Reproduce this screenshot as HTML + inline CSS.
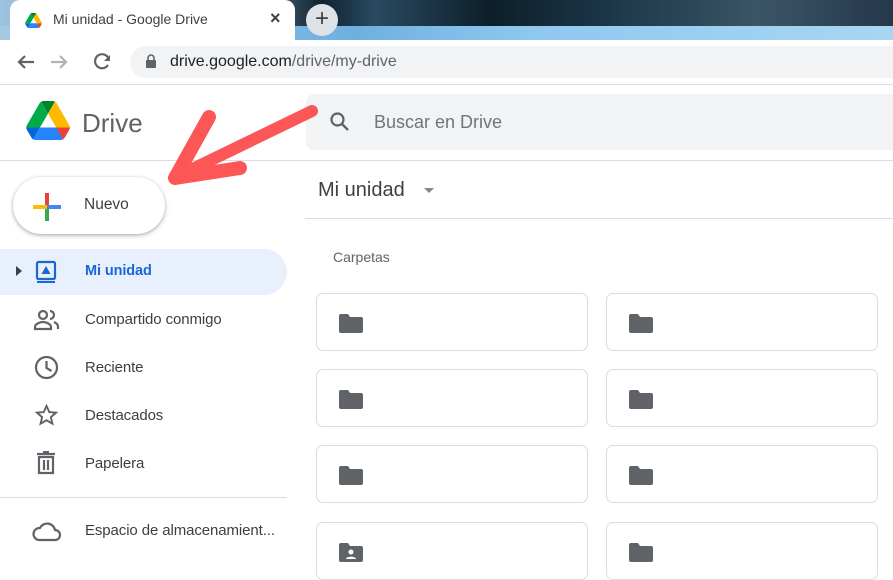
<!DOCTYPE html>
<html><head><meta charset="utf-8"><style>
*{margin:0;padding:0;box-sizing:border-box}
body{width:893px;height:562px;overflow:hidden;background:#fff;font-family:"Liberation Sans",Arial,sans-serif;position:relative;color:#3c4043}
.abs{position:absolute}
.tabbar{left:0;top:0;width:893px;height:40px;background:linear-gradient(90deg,#9cc3e0 0%,#5f7f98 28%,#0f2230 36%,#2a4a60 42%,#0c1e2a 55%,#1e3a4d 70%,#3b5566 85%,#24384a 100%)}
.tabbar2{left:0;top:26px;width:893px;height:14px;background:linear-gradient(90deg,#a8c8e0,#6fb0e0 40%,#8fc8ef 60%,#a8d6f2)}
.tab{left:10px;top:0;width:285px;height:42px;background:#fff;border-radius:10px 10px 0 0}
.item{position:absolute;left:85px;font-size:15px;color:#3c4043;letter-spacing:-.1px}
.card{position:absolute;width:272px;height:58px;border:1px solid #dadce0;border-radius:7px;background:#fff}
.fold{position:absolute;left:22px;top:20px;width:24px;height:19px}
</style></head><body>
<div class="abs tabbar"></div><div class="abs tabbar2"></div>
<div class="abs tab"></div>
<svg class="abs" style="left:25px;top:13px" width="17" height="15" viewBox="0 0 87 78"><path d="M6.6 66.850l3.85 6.65c.8 1.4 1.95 2.5 3.3 3.3L27.5 53H0c0 1.55.4 3.1 1.2 4.5z" fill="#0066da"/><path d="M43.65 25L29.9 1.2c-1.35.8-2.5 1.9-3.3 3.3L1.2 48.5A9 9 0 000 53h27.5z" fill="#00ac47"/><path d="M73.55 76.8c1.35-.8 2.5-1.9 3.3-3.3l1.6-2.75 7.65-13.25c.8-1.4 1.2-2.95 1.2-4.5H59.8l5.85 11.5z" fill="#ea4335"/><path d="M43.65 25L57.4 1.2C56.050.4 54.5 0 52.9 0H34.4c-1.6 0-3.15.45-4.5 1.2z" fill="#00832d"/><path d="M59.8 53H27.5L13.75 76.8c1.35.8 2.9 1.2 4.5 1.2h50.8c1.6 0 3.15-.45 4.5-1.2z" fill="#2684fc"/><path d="M73.4 26.5L60.7 4.5c-.8-1.4-1.950-2.5-3.3-3.3L43.65 25 59.8 53h27.45c0-1.55-.4-3.1-1.2-4.5z" fill="#ffba00"/></svg>
<div class="abs" style="left:53px;top:11px;font-size:14px;color:#3c4043">Mi unidad - Google Drive</div>
<div class="abs" style="left:270px;top:8px;font-size:18px;color:#3c4043;font-weight:bold">×</div>
<div class="abs" style="left:306px;top:4px;width:32px;height:32px;border-radius:50%;background:#dee1e6;text-align:center;line-height:30px;font-size:24px;color:#3c4043">+</div>
<svg class="abs" style="left:14px;top:52px" width="100" height="20" viewBox="0 0 100 20" fill="none" stroke-width="2.2"><path d="M20 10H5M11 4L5 10l6 6" stroke="#5f6368"/><path d="M52 10H37M46 4l6 6-6 6" stroke="#b0b3b8"/><path d="M95 8A7 7 0 1 0 94 13" stroke="#5f6368"/><path d="M96 3v6h-6z" fill="#5f6368" stroke="none"/></svg>
<div class="abs" style="left:130px;top:46px;width:780px;height:32px;border-radius:16px;background:#f1f3f4"></div>
<svg class="abs" style="left:145px;top:54px" width="12" height="14" viewBox="0 0 12 14"><rect x="1" y="6" width="10" height="8" rx="1" fill="#5f6368"/><path d="M3 6V4a3 3 0 0 1 6 0v2" stroke="#5f6368" stroke-width="1.6" fill="none"/></svg>
<div class="abs" style="left:170px;top:53px;font-size:16px;color:#202124">drive.google.com<span style="color:#5f6368">/drive/my-drive</span></div>
<div class="abs" style="left:0;top:84px;width:893px;height:1px;background:#dadce0"></div>
<svg class="abs" style="left:26px;top:101px" width="44" height="39" viewBox="0 0 87 78"><path d="M6.6 66.85l3.85 6.65c.8 1.4 1.95 2.5 3.3 3.3L27.5 53H0c0 1.55.4 3.1 1.2 4.5z" fill="#0066da"/><path d="M43.65 25L29.9 1.2c-1.35.8-2.5 1.9-3.3 3.3L1.2 48.5A9 9 0 000 53h27.5z" fill="#00ac47"/><path d="M73.55 76.8c1.35-.8 2.5-1.9 3.3-3.3l1.6-2.75 7.65-13.25c.8-1.4 1.2-2.95 1.2-4.5H59.8l5.85 11.5z" fill="#ea4335"/><path d="M43.65 25L57.4 1.2C56.05.4 54.5 0 52.9 0H34.4c-1.6 0-3.15.45-4.5 1.2z" fill="#00832d"/><path d="M59.8 53H27.5L13.75 76.8c1.35.8 2.9 1.2 4.5 1.2h50.8c1.6 0 3.15-.45 4.5-1.2z" fill="#2684fc"/><path d="M73.4 26.5L60.7 4.5c-.8-1.4-1.95-2.5-3.3-3.3L43.65 25 59.8 53h27.45c0-1.55-.4-3.1-1.2-4.5z" fill="#ffba00"/></svg>
<div class="abs" style="left:82px;top:108px;font-size:26px;color:#5f6368">Drive</div>
<div class="abs" style="left:306px;top:94px;width:600px;height:56px;border-radius:8px;background:#f1f3f4"></div>
<svg class="abs" style="left:328px;top:110px" width="24" height="24" viewBox="0 0 24 24"><circle cx="9.5" cy="9.5" r="6" stroke="#5f6368" stroke-width="2.2" fill="none"/><path d="M14 14l6 6" stroke="#5f6368" stroke-width="2.4"/></svg>
<div class="abs" style="left:374px;top:112px;font-size:18px;color:#70757a">Buscar en Drive</div>
<div class="abs" style="left:0;top:160px;width:893px;height:1px;background:#dadce0"></div>
<div class="abs" style="left:13px;top:177px;width:152px;height:57px;border-radius:29px;background:#fff;box-shadow:0 1px 3px rgba(60,64,67,.35),0 2px 6px rgba(60,64,67,.15)"></div>
<svg class="abs" style="left:32px;top:192px" width="30" height="30" viewBox="0 0 30 30"><rect x="13" y="1" width="4" height="14" fill="#ea4335"/><rect x="13" y="15" width="4" height="14" fill="#34a853"/><rect x="1" y="13" width="14" height="4" fill="#fbbc04"/><rect x="15" y="13" width="14" height="4" fill="#4285f4"/></svg>
<div class="abs" style="left:84px;top:196px;font-size:15.5px;color:#3c4043">Nuevo</div>
<div class="abs" style="left:0;top:249px;width:287px;height:46px;border-radius:0 23px 23px 0;background:#e8f0fe"></div>
<div class="abs" style="left:16px;top:266px;width:0;height:0;border-left:6px solid #3c4043;border-top:5px solid transparent;border-bottom:5px solid transparent"></div>
<svg class="abs" style="left:35px;top:260px" width="22" height="24" viewBox="0 0 22 24"><rect x="2" y="2" width="18" height="17" rx="1.5" fill="none" stroke="#1967d2" stroke-width="2.2"/><path d="M2 22h18" stroke="#1967d2" stroke-width="2"/><path d="M11 6l4.5 8h-9z" fill="#1967d2"/></svg>
<div class="item" style="top:263px;color:#1967d2;font-weight:bold;font-size:14.5px">Mi unidad</div>
<svg class="abs" style="left:33px;top:309px" width="28" height="22" viewBox="0 0 28 22" fill="none" stroke="#5f6368" stroke-width="2.2"><circle cx="10" cy="6" r="4"/><path d="M2 20v-2c0-3 5-5 8-5s8 2 8 5v2z"/><path d="M17 2a4 4 0 0 1 0 8M21 13c2 1 4 2 4 5v2"/></svg>
<div class="item" style="top:311px">Compartido conmigo</div>
<svg class="abs" style="left:34px;top:355px" width="25" height="25" viewBox="0 0 25 25" fill="none" stroke="#5f6368" stroke-width="2.2"><circle cx="12.5" cy="12.5" r="10.5"/><path d="M12.5 6v7l5 3"/></svg>
<div class="item" style="top:359px">Reciente</div>
<svg class="abs" style="left:35px;top:404px" width="23" height="22" viewBox="0 0 24 23" fill="none" stroke="#5f6368" stroke-width="2"><path d="M12 2l2.9 6.5 7 .6-5.3 4.6 1.6 6.9L12 17l-6.2 3.6 1.6-6.9L2.1 9.1l7-.6z"/></svg>
<div class="item" style="top:407px">Destacados</div>
<svg class="abs" style="left:36px;top:451px" width="20" height="24" viewBox="0 0 20 24" fill="none" stroke="#5f6368" stroke-width="2.2"><path d="M3 6h14v16H3zM1 3h18M7 1h6M8 9v10M12 9v10"/></svg>
<div class="item" style="top:455px">Papelera</div>
<div class="abs" style="left:0;top:497px;width:287px;height:1px;background:#dadce0"></div>
<svg class="abs" style="left:31px;top:521px" width="31" height="21" viewBox="0 0 31 21" fill="none" stroke="#5f6368" stroke-width="2.2"><path d="M8 19h16a5 5 0 0 0 0-10 8 8 0 0 0-15-2A6 6 0 0 0 8 19z"/></svg>
<div class="item" style="top:522px">Espacio de almacenamient...</div>
<div class="abs" style="left:318px;top:179px;font-size:20px;color:#3c4043">Mi unidad</div>
<div class="abs" style="left:424px;top:188px;width:0;height:0;border-top:5px solid #80868b;border-left:5px solid transparent;border-right:5px solid transparent"></div>
<div class="abs" style="left:305px;top:218px;width:600px;height:1px;background:#dadce0"></div>
<div class="abs" style="left:333px;top:249px;font-size:14px;color:#5f6368">Carpetas</div>
<div class="card" style="left:316px;top:293px"><svg class="fold" viewBox="0 0 24 19"><path d="M2 0h7l2 3h11a2 2 0 0 1 2 2v12a2 2 0 0 1-2 2H2a2 2 0 0 1-2-2V2a2 2 0 0 1 2-2z" fill="#5f6368"/></svg></div>
<div class="card" style="left:606px;top:293px"><svg class="fold" viewBox="0 0 24 19"><path d="M2 0h7l2 3h11a2 2 0 0 1 2 2v12a2 2 0 0 1-2 2H2a2 2 0 0 1-2-2V2a2 2 0 0 1 2-2z" fill="#5f6368"/></svg></div>
<div class="card" style="left:316px;top:369px"><svg class="fold" viewBox="0 0 24 19"><path d="M2 0h7l2 3h11a2 2 0 0 1 2 2v12a2 2 0 0 1-2 2H2a2 2 0 0 1-2-2V2a2 2 0 0 1 2-2z" fill="#5f6368"/></svg></div>
<div class="card" style="left:606px;top:369px"><svg class="fold" viewBox="0 0 24 19"><path d="M2 0h7l2 3h11a2 2 0 0 1 2 2v12a2 2 0 0 1-2 2H2a2 2 0 0 1-2-2V2a2 2 0 0 1 2-2z" fill="#5f6368"/></svg></div>
<div class="card" style="left:316px;top:445px"><svg class="fold" viewBox="0 0 24 19"><path d="M2 0h7l2 3h11a2 2 0 0 1 2 2v12a2 2 0 0 1-2 2H2a2 2 0 0 1-2-2V2a2 2 0 0 1 2-2z" fill="#5f6368"/></svg></div>
<div class="card" style="left:606px;top:445px"><svg class="fold" viewBox="0 0 24 19"><path d="M2 0h7l2 3h11a2 2 0 0 1 2 2v12a2 2 0 0 1-2 2H2a2 2 0 0 1-2-2V2a2 2 0 0 1 2-2z" fill="#5f6368"/></svg></div>
<div class="card" style="left:316px;top:522px"><svg class="fold" viewBox="0 0 24 19"><path d="M2 0h7l2 3h11a2 2 0 0 1 2 2v12a2 2 0 0 1-2 2H2a2 2 0 0 1-2-2V2a2 2 0 0 1 2-2z" fill="#5f6368"/><circle cx="12" cy="9" r="2.5" fill="#fff"/><path d="M7 16c0-3 10-3 10 0z" fill="#fff"/></svg></div>
<div class="card" style="left:606px;top:522px"><svg class="fold" viewBox="0 0 24 19"><path d="M2 0h7l2 3h11a2 2 0 0 1 2 2v12a2 2 0 0 1-2 2H2a2 2 0 0 1-2-2V2a2 2 0 0 1 2-2z" fill="#5f6368"/></svg></div>
<svg class="abs" style="left:0;top:0" width="893" height="562" viewBox="0 0 893 562" fill="none" stroke="#fd5656" stroke-linecap="round" stroke-linejoin="round"><path d="M209 117L175 178L240 168" stroke-width="14"/><path d="M178 176L312 111" stroke-width="12"/></svg>
</body></html>
